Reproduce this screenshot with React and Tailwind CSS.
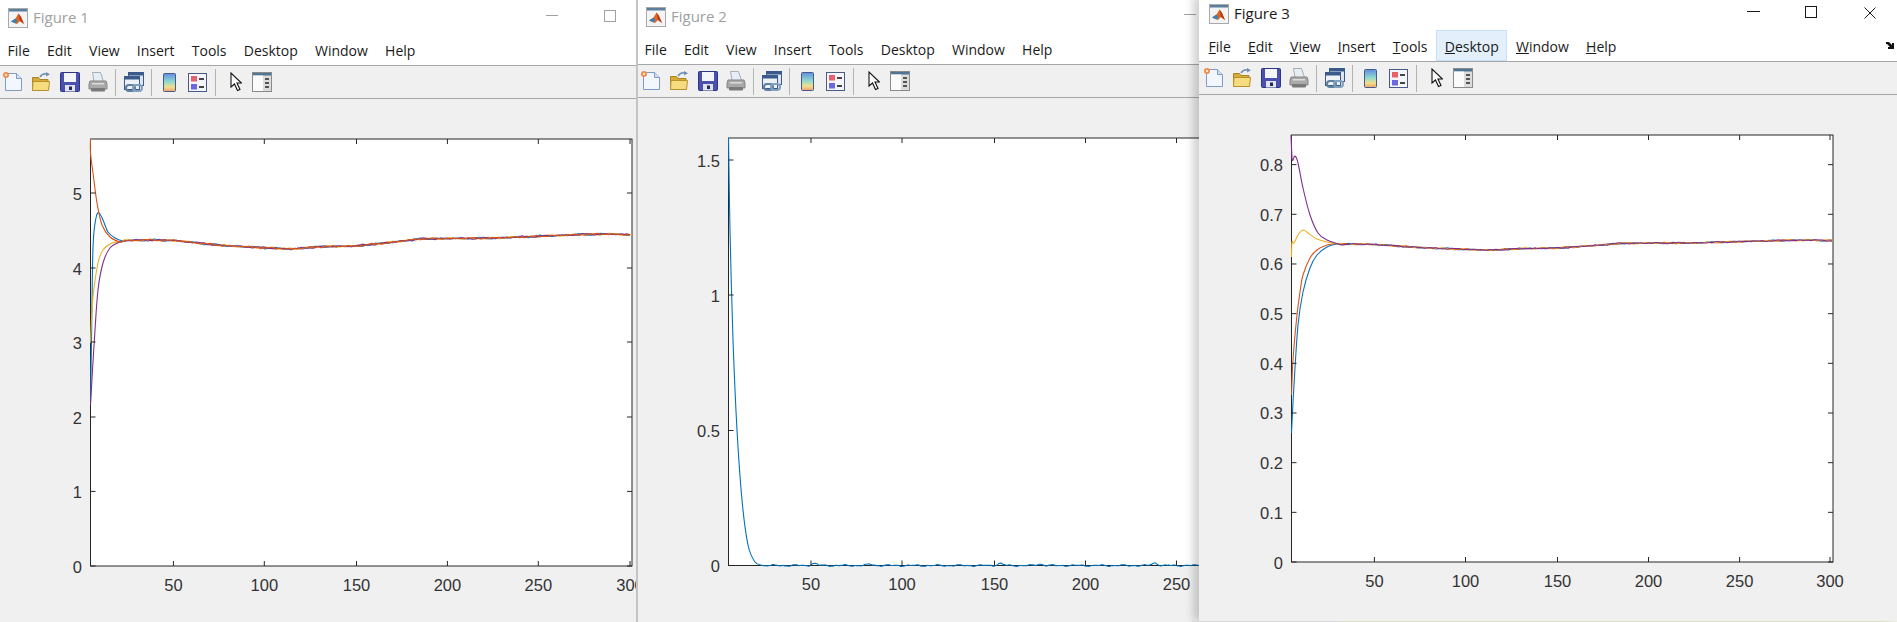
import React from 'react';

const COLORS = { blue: '#0072BD', orange: '#D95319', yellow: '#EDB120', purple: '#7E2F8E' };
const MENU = [
  ['F', 'ile'],
  ['E', 'dit'],
  ['V', 'iew'],
  ['I', 'nsert'],
  ['T', 'ools'],
  ['D', 'esktop'],
  ['W', 'indow'],
  ['H', 'elp'],
];

// shared settled value every curve sits on (in Figure 1's units)
const BASE = [
  [0, 4.36], [20, 4.36], [35, 4.37], [50, 4.365], [75, 4.3], [100, 4.265], [115, 4.25], [130, 4.28], [150, 4.29],
  [170, 4.34], [185, 4.385], [200, 4.39], [225, 4.395], [250, 4.42], [275, 4.445], [290, 4.45], [300, 4.44], [310, 4.44],
];

const baseAt = (d) => {
  for (let i = 1; i < BASE.length; i++) {
    if (d <= BASE[i][0]) {
      const [x0, y0] = BASE[i - 1];
      const [x1, y1] = BASE[i];
      return y0 + ((d - x0) / (x1 - x0)) * (y1 - y0);
    }
  }
  return 4.44;
};

const wiggle = (x, seed) =>
  Math.sin(x * 0.31 + seed) * 0.45 + Math.sin(x * 0.83 + seed * 2.1) * 0.35 + Math.sin(x * 1.9 + seed * 3.3) * 0.25;

// catmull-rom through the hand-read points
const smooth = (pts) => {
  let d = 'M' + pts[0][0] + ' ' + pts[0][1];
  for (let i = 0; i < pts.length - 1; i++) {
    const p0 = pts[Math.max(i - 1, 0)];
    const p1 = pts[i];
    const p2 = pts[i + 1];
    const p3 = pts[Math.min(i + 2, pts.length - 1)];
    const c1x = p1[0] + (p2[0] - p0[0]) / 6;
    const c1y = p1[1] + (p2[1] - p0[1]) / 6;
    const c2x = p2[0] - (p3[0] - p1[0]) / 6;
    const c2y = p2[1] - (p3[1] - p1[1]) / 6;
    d += ' C' + c1x.toFixed(1) + ' ' + c1y.toFixed(1) + ' ' + c2x.toFixed(1) + ' ' + c2y.toFixed(1) + ' ' + p2[0].toFixed(1) + ' ' + p2[1].toFixed(1);
  }
  return d;
};

const tail = (startX, endX, seed, toY, amp) => {
  const out = [];
  for (let x = startX + 3; x <= endX; x += 3) out.push([x, toY(x) + wiggle(x, seed) * amp]);
  return out;
};

const fig1Y = (x) => 566 - 74.6 * baseAt(50 + (x - 173.4) / 1.824);
const fig3Y = (x) => 562 - 496.7 * (0.64 + (baseAt(50 + (x - 1374.4) / 1.824) - 4.37) * 0.1);

const FIG1_HEADS = [
  { color: COLORS.blue, seed: 1, pts: [[90.5, 400], [91.5, 340], [93, 247], [96, 218], [99, 213], [103, 220], [108, 232], [115, 238], [123, 241]] },
  { color: COLORS.yellow, seed: 4, pts: [[90.5, 343], [91, 330], [93, 297], [98, 263], [103, 250], [112, 243], [122, 241.5]] },
  { color: COLORS.purple, seed: 5.5, pts: [[90.5, 405], [92.5, 370], [95, 330], [98, 290], [103, 263], [110, 248], [120, 242], [123, 241.5]] },
  { color: COLORS.orange, seed: 2.4, pts: [[90.5, 139], [90.5, 153], [93, 173], [97, 203], [102, 225], [110, 237], [120, 242], [123, 241.5]] },
];

const FIG3_HEADS = [
  { color: COLORS.blue, seed: 1.7, pts: [[1291.5, 433], [1294, 385], [1298, 325], [1303, 292], [1310, 268], [1317, 255], [1327, 247], [1337, 244]] },
  { color: COLORS.orange, seed: 3, pts: [[1291.5, 395], [1293, 360], [1297, 315], [1300, 292], [1303, 275], [1310, 258], [1317, 250], [1327, 245], [1337, 243.7]] },
  { color: COLORS.yellow, seed: 4.2, pts: [[1291.5, 257], [1292, 242], [1294, 243], [1298, 235], [1303, 230], [1308, 233], [1317, 239], [1327, 242], [1337, 243.7]] },
  { color: COLORS.purple, seed: 6, pts: [[1291, 135], [1292, 158], [1293, 160], [1295, 156], [1298, 163], [1303, 188], [1310, 215], [1318, 233], [1327, 240], [1337, 243.5]] },
];

const fig2Curve = () => {
  const head = [[728.5, 138], [730, 230], [733, 340], [737, 430], [742, 500], [748, 545], [755, 562], [762, 565.3]];
  const bumps = [[814, 2], [870, 1.2], [1000, 2], [1040, 1.5], [1155, 2.5]];
  const rest = [];
  for (let x = 765; x <= 1205; x += 2) {
    const w = Math.sin(x * 0.27) * 0.5 + Math.sin(x * 0.61 + 1) * 0.4 + Math.sin(x * 1.3 + 2) * 0.2;
    const b = bumps.reduce((acc, [cx, h]) => acc + h * Math.exp(-((x - cx) ** 2) / 16), 0);
    rest.push([x, 565.5 - w - b]);
  }
  return smooth([...head, ...rest]);
};

const FIGURES = [
  {
    box: { x0: 90.5, x1: 632, y0: 139, y1: 566 },
    xTicks: [[173.4, '50'], [264.3, '100'], [356.5, '150'], [447.4, '200'], [538.3, '250'], [630, '300']],
    yTicks: [[566, '0'], [491.4, '1'], [417, '2'], [342, '3'], [268, '4'], [193, '5']],
    labelX: 82,
    labelY: 591,
    curves: FIG1_HEADS.map((c) => ({ color: c.color, d: smooth([...c.pts, ...tail(c.pts[c.pts.length - 1][0], 632, c.seed, fig1Y, 1.1)]) })),
  },
  {
    box: { x0: 728.5, x1: 1270, y0: 138, y1: 565.5 },
    xTicks: [[811, '50'], [902, '100'], [994.5, '150'], [1085.5, '200'], [1176.5, '250']],
    yTicks: [[565.5, '0'], [430.5, '0.5'], [295, '1'], [160, '1.5']],
    labelX: 720,
    labelY: 590,
    curves: [{ color: COLORS.blue, d: fig2Curve() }],
  },
  {
    box: { x0: 1291.5, x1: 1833, y0: 135, y1: 562 },
    xTicks: [[1374.4, '50'], [1465.5, '100'], [1557.5, '150'], [1648.5, '200'], [1739.6, '250'], [1830, '300']],
    yTicks: [0, 1, 2, 3, 4, 5, 6, 7, 8].map((i) => [562 - i * 49.67, i === 0 ? '0' : '0.' + i]),
    labelX: 1283,
    labelY: 587,
    curves: FIG3_HEADS.map((c) => ({ color: c.color, d: smooth([...c.pts, ...tail(c.pts[c.pts.length - 1][0], 1833, c.seed, fig3Y, 0.8)]) })),
  },
];

const Plot = ({ fig, left, top, width, height }) => {
  const { box, xTicks, yTicks, labelX, labelY, curves } = fig;
  return (
    <svg className="block" width={width} height={height} viewBox={left + ' ' + top + ' ' + width + ' ' + height}>
      <rect x={box.x0} y={box.y0} width={box.x1 - box.x0} height={box.y1 - box.y0} fill="#fff" stroke="#262626" strokeWidth="1" />
      {curves.map((c, i) => (
        <path key={i} d={c.d} fill="none" stroke={c.color} strokeWidth="1.1" />
      ))}
      {xTicks.map(([x, label]) => (
        <g key={label}>
          <path d={'M' + x + ' ' + box.y1 + 'v-5M' + x + ' ' + box.y0 + 'v5'} stroke="#262626" />
          <text x={x} y={labelY} textAnchor="middle" fill="#333" fontSize="16.5" fontFamily="'Liberation Sans', Arial, sans-serif">
            {label}
          </text>
        </g>
      ))}
      {yTicks.map(([y, label]) => (
        <g key={label}>
          <path d={'M' + box.x0 + ' ' + y + 'h5M' + box.x1 + ' ' + y + 'h-5'} stroke="#262626" />
          <text x={labelX} y={y + 6.5} textAnchor="end" fill="#333" fontSize="16.5" fontFamily="'Liberation Sans', Arial, sans-serif">
            {label}
          </text>
        </g>
      ))}
    </svg>
  );
};

const MatlabIcon = () => (
  <svg width="20" height="20" viewBox="0 0 20 20" className="shrink-0">
    <rect x="0.5" y="0.5" width="19" height="19" fill="#f4f4f4" stroke="#a9a9a9" />
    <rect x="1" y="1" width="18" height="2.5" fill="#5d7f9e" />
    <path d="M3 13.5 L7.5 10.5 L10.5 5.5 L13 9 L16 16 L12 13 L9 16 Z" fill="#e2661d" />
    <path d="M3 13.5 L7.5 10.5 L9.5 13 L7.5 15.5 Z" fill="#3f7fb5" />
    <path d="M10.5 5.5 L13 9 L16 16 L12 13 Z" fill="#b5391a" />
  </svg>
);

const NewIcon = () => (
  <svg width="20" height="20" viewBox="0 0 20 20">
    <path d="M2.5 1.5h11l5 5v12h-16z" fill="#f2f7fd" stroke="#7f9cc4" />
    <path d="M13.5 1.5v5h5" fill="#cfe0f4" stroke="#7f9cc4" />
    <circle cx="3" cy="3" r="3" fill="#f08a4b" />
    <circle cx="3" cy="3" r="1.2" fill="#fde6c4" />
  </svg>
);

const OpenIcon = () => (
  <svg width="20" height="20" viewBox="0 0 20 20">
    <path d="M1.5 5.5h6l1.5 2h8v11h-15.5z" fill="#d9aa3a" stroke="#a98524" />
    <path d="M1.5 18.5l0.5-9h16.5l-1 9z" fill="#f6dc7e" stroke="#b8922c" />
    <path d="M9 5c1.5-2.5 4-3.5 7-3" fill="none" stroke="#6f8fb8" strokeWidth="1.5" />
    <path d="M15 0l4 2.2-4 2.3z" fill="#6f8fb8" />
  </svg>
);

const SaveIcon = () => (
  <svg width="20" height="20" viewBox="0 0 20 20">
    <rect x="0.5" y="0.5" width="19" height="19" rx="1" fill="#4b4fae" stroke="#2d3680" />
    <rect x="4" y="1" width="12" height="9" fill="#f3f5fb" />
    <rect x="5" y="13" width="10" height="6.5" fill="#e0e2ec" />
    <rect x="9" y="14.5" width="3" height="3.5" fill="#24295c" />
  </svg>
);

const PrintIcon = () => (
  <svg width="20" height="20" viewBox="0 0 20 20">
    <path d="M4.5 0.5h8l3 9H6z" fill="#e6edf5" stroke="#a7adb5" />
    <path d="M2 9h16l1 3v5H1v-5z" fill="#a9a9a9" stroke="#858585" />
    <rect x="3" y="16" width="14" height="3.5" rx="1" fill="#7a7a7a" />
    <rect x="4" y="11" width="12" height="1.5" fill="#dcdcdc" />
  </svg>
);

const LinkIcon = () => (
  <svg width="20" height="20" viewBox="0 0 20 20">
    <rect x="4.5" y="0.5" width="15" height="13" fill="#dfe6f0" stroke="#3a5a8c" />
    <rect x="4.5" y="0.5" width="15" height="3" fill="#3a5a8c" />
    <rect x="0.5" y="4.5" width="15" height="13" fill="#eef2f7" stroke="#3a5a8c" />
    <rect x="0.5" y="4.5" width="15" height="3" fill="#3a5a8c" />
    <rect x="2" y="13" width="9" height="6" rx="3" fill="none" stroke="#5f7f9f" strokeWidth="2" />
    <rect x="9" y="13" width="9" height="6" rx="3" fill="none" stroke="#7f9fbf" strokeWidth="2" />
  </svg>
);

const ColorbarIcon = ({ id }) => (
  <svg width="13" height="19" viewBox="0 0 13 19">
    <defs>
      <linearGradient id={id} x1="0" y1="0" x2="0" y2="1">
        <stop offset="0" stopColor="#5f8ee0" />
        <stop offset="0.45" stopColor="#8fd8d0" />
        <stop offset="0.75" stopColor="#f0e08c" />
        <stop offset="1" stopColor="#f0a070" />
      </linearGradient>
    </defs>
    <rect x="0.5" y="0.5" width="12" height="18" rx="1" fill={'url(#' + id + ')'} stroke="#4a5a86" />
  </svg>
);

const LegendIcon = () => (
  <svg width="19" height="19" viewBox="0 0 19 19">
    <rect x="0.5" y="0.5" width="18" height="18" fill="#f4f6fb" stroke="#4a5a86" />
    <rect x="3" y="3" width="6" height="5.5" fill="#e8606a" />
    <rect x="3" y="11" width="6" height="5.5" fill="#6a6ae0" />
    <rect x="11" y="5" width="5" height="2" fill="#444" />
    <rect x="11" y="13" width="5" height="2" fill="#444" />
  </svg>
);

const CursorIcon = () => (
  <svg width="12" height="20" viewBox="0 0 12 20">
    <path d="M1 1v14l3.5-3 3 6.5 2.5-1-3-6.5h4.5z" fill="#fff" stroke="#111" strokeWidth="1.1" />
  </svg>
);

const PanelIcon = () => (
  <svg width="20" height="20" viewBox="0 0 20 20">
    <rect x="0.5" y="0.5" width="19" height="19" fill="#dcdcdc" stroke="#8a8a8a" />
    <rect x="1" y="1" width="18" height="2.5" fill="#4f7595" />
    <rect x="1" y="3.5" width="10" height="15.5" fill="#fbfbfb" />
    <rect x="13" y="6" width="4" height="2" fill="#555" />
    <rect x="13" y="10" width="4" height="2" fill="#555" />
    <rect x="13" y="14" width="4" height="2" fill="#555" />
  </svg>
);

const Sep = () => <div className="w-px h-[27px] bg-[#b4b4b4]" />;

const Toolbar = ({ id, className }) => (
  <div className={'h-[32px] shrink-0 flex items-center bg-[#f0f0f0] border-b border-[#a6a6a6] box-content ' + className}>
    <NewIcon />
    <div className="ml-2"><OpenIcon /></div>
    <div className="ml-[9px]"><SaveIcon /></div>
    <div className="ml-2"><PrintIcon /></div>
    <div className="ml-[7px]"><Sep /></div>
    <div className="ml-2"><LinkIcon /></div>
    <div className="ml-[7px]"><Sep /></div>
    <div className="ml-[11px]"><ColorbarIcon id={id} /></div>
    <div className="ml-[12px]"><LegendIcon /></div>
    <div className="ml-2"><Sep /></div>
    <div className="ml-[14px]"><CursorIcon /></div>
    <div className="ml-[10px]"><PanelIcon /></div>
  </div>
);

const Figure = ({ title, active, className, titleClass, menuClass, toolClass, fig, left, width, height, plotTop }) => (
  <div className={'absolute flex flex-col bg-[#f0f0f0] overflow-hidden ' + className}>
    <div className={'h-[34px] shrink-0 bg-white flex items-center pt-px ' + titleClass}>
      <MatlabIcon />
      <span className={"ml-[5px] text-[15px] font-['Open_Sans',sans-serif] " + (active ? 'text-[#1a1a1a]' : 'text-[#a0a0a0]')}>
        {title}
      </span>
    </div>
    <div className="h-[31px] shrink-0 bg-white border-b border-[#a6a6a6] box-content">
      <div className={"h-full flex items-stretch font-['Open_Sans',sans-serif] " + menuClass}>
        {MENU.map(([first, rest]) => (
          <div
            key={first}
            className={
              'flex items-center pt-px px-[7.6px] text-[14px] text-[#1a1a1a] border ' +
              (active && first === 'D' ? 'bg-[#e3f0fb] border-[#c5e0f8]' : 'border-transparent')
            }
          >
            <span className={active ? 'underline' : ''}>{first}</span>
            {rest}
          </div>
        ))}
      </div>
    </div>
    <Toolbar id={'cbar-' + left} className={toolClass} />
    <div className="flex-1">
      <Plot fig={fig} left={left} top={plotTop} width={width} height={height} />
    </div>
  </div>
);

export default function App() {
  return (
    <div className="relative w-[1897px] h-[622px] overflow-hidden bg-[#eef3d8]">
      <Figure
        title="Figure 1"
        fig={FIGURES[0]}
        left={0}
        width={636}
        height={523}
        plotTop={99}
        titleClass="pl-2"
        menuClass="-ml-px"
        toolClass="pl-[3px]"
        className="left-0 top-0 w-[636px] h-[622px]"
      />
      {/* Figure 1 caption buttons */}
      <div className="absolute left-[546px] top-[15px] w-[12px] h-px bg-[#a0a0a0]" />
      <div className="absolute left-[604px] top-[10px] w-[12px] h-[12px] border border-[#a0a0a0]" />

      <Figure
        title="Figure 2"
        fig={FIGURES[1]}
        left={638}
        width={561}
        height={524}
        plotTop={98}
        titleClass="pl-2"
        menuClass="-ml-[2px]"
        toolClass="pl-[3px]"
        className="left-[636px] top-[-1px] w-[563px] h-[623px] border-l-2 border-[#c4c4c4]"
      />
      <div className="absolute left-[1184px] top-[14px] w-[12px] h-px bg-[#a0a0a0]" />

      <Figure
        title="Figure 3"
        active
        fig={FIGURES[2]}
        left={1199}
        width={698}
        height={526}
        plotTop={95}
        titleClass="pl-[10px]"
        menuClass="ml-px"
        toolClass="pl-[5px]"
        className="left-[1199px] top-[-4px] w-[698px] h-[625px] shadow-[-6px_0_8px_rgba(0,0,0,0.18)]"
      />
      <div className="absolute left-[1747px] top-[11px] w-[13px] h-px bg-[#1a1a1a]" />
      <div className="absolute left-[1805px] top-[6px] w-[12px] h-[12px] border border-[#1a1a1a]" />
      <svg className="absolute left-[1864px] top-[7px]" width="12" height="12" viewBox="0 0 12 12">
        <path d="M0.5 0.5L11.5 11.5M11.5 0.5L0.5 11.5" stroke="#1a1a1a" fill="none" />
      </svg>
      <svg className="absolute left-[1886px] top-[41px]" width="8" height="8" viewBox="0 0 8 8">
        <path d="M0 1h3l3 3V2h2v6H2V6h2L1 3H0z" fill="#111" />
      </svg>
      <div className="absolute left-[1192px] top-[621px] w-[145px] h-px bg-[#d8d8d8]" />
    </div>
  );
}
